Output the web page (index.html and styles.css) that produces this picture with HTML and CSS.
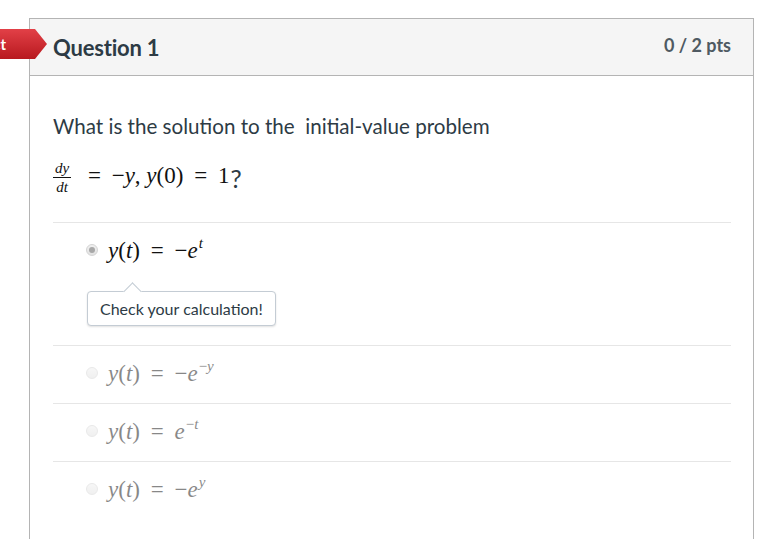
FILE: index.html
```html
<!DOCTYPE html>
<html lang="en">
<head>
  <meta charset="UTF-8" />
  <title>Question 1</title>
  <link rel="stylesheet" href="styles.css">
</head>
<body>
  <div class="page">
    <div class="question">
      <div class="flag"><span>Incorrect</span></div>

      <div class="question-header">
        <h2>Question 1</h2>
        <span class="points">0 / 2 pts</span>
      </div>

      <div class="question-body">
        <p class="prompt">What is the solution to the&nbsp; initial-value problem</p>
        <p class="equation">
          <span class="math">
            <span class="frac"><span class="num">dy</span><span class="den">dt</span></span>
            <span class="op">=</span> −<i>y</i>, <i>y</i>(0) <span class="op">=</span> 1</span><span class="qmark">?</span>
        </p>

        <div class="answers">
          <div class="answer selected">
            <div class="answer-row">
              <span class="radio checked"></span>
              <span class="math"><i>y</i>(<i>t</i>) <span class="op">=</span> −<i>e</i><sup><i>t</i></sup></span>
            </div>
            <div class="comment">Check your calculation!</div>
          </div>

          <div class="answer">
            <div class="answer-row">
              <span class="radio"></span>
              <span class="math"><i>y</i>(<i>t</i>) <span class="op">=</span> −<i>e</i><sup>−<i>y</i></sup></span>
            </div>
          </div>

          <div class="answer">
            <div class="answer-row">
              <span class="radio"></span>
              <span class="math"><i>y</i>(<i>t</i>) <span class="op">=</span> <i>e</i><sup>−<i>t</i></sup></span>
            </div>
          </div>

          <div class="answer">
            <div class="answer-row">
              <span class="radio"></span>
              <span class="math"><i>y</i>(<i>t</i>) <span class="op">=</span> −<i>e</i><sup><i>y</i></sup></span>
            </div>
          </div>
        </div>
      </div>
    </div>
  </div>
</body>
</html>
```

FILE: styles.css
```css
body {
  margin: 0;
  background: #fff;
  font-family: Lato, 'Open Sans', sans-serif;
  color: #2d3b45;
  overflow: hidden;
}

.page {
  padding: 18px 3px 0 29px;
}

.question {
  position: relative;
  border: 1px solid #b4b4b4;
  border-bottom: none;
  min-height: 540px;
}

.flag {
  position: absolute;
  left: -103px;
  top: 10px;
  width: 120px;
  height: 30px;
  background: linear-gradient(#e24047, #b8191f);
  clip-path: polygon(0 0, 90% 0, 100% 50%, 90% 100%, 0 100%);
  color: #fff;
  font-weight: bold;
  font-size: 15px;
  line-height: 30px;
  text-align: right;
  box-sizing: border-box;
  padding-right: 41px;
}

.question-header {
  display: flex;
  justify-content: space-between;
  align-items: flex-start;
  height: 56px;
  background: #f5f5f5;
  border-bottom: 1px solid #b4b4b4;
  padding: 0 22px 0 23px;
}

.question-header h2 {
  margin: 15px 0 0;
  font-size: 22px;
  font-weight: bold;
  letter-spacing: -0.2px;
}

.points {
  margin-top: 15px;
  font-size: 18px;
  font-weight: bold;
  color: #4f5a62;
}

.question-body {
  padding: 36px 22px 0 23px;
}

.prompt {
  margin: 0;
  font-size: 20.6px;
  line-height: 28px;
}

.equation {
  margin: 20px 0 0;
  display: flex;
  align-items: center;
  height: 36px;
}

.math {
  font-family: 'Liberation Serif', 'DejaVu Serif', serif;
  font-size: 23px;
  color: #111;
  white-space: nowrap;
}

.op {
  margin: 0 5px;
}

.frac {
  display: inline-flex;
  flex-direction: column;
  align-items: center;
  vertical-align: middle;
  font-style: italic;
  font-size: 15px;
  line-height: 15px;
  margin-right: 6px;
}

.frac .num {
  border-bottom: 1px solid #111;
  padding: 0 2px 1px;
}

.frac .den {
  padding-top: 2px;
}

.qmark {
  font-size: 25px;
  color: #2d3b45;
  margin-left: 1px;
}

sup {
  font-size: 15px;
  vertical-align: 10px;
  line-height: 0;
  margin-left: 1px;
}

.answers {
  margin-top: 26px;
}

.answer {
  border-top: 1px solid #e6e6e6;
  min-height: 57px;
}

.answer:not(.selected) .answer-row {
  opacity: 0.5;
}

.answer-row {
  display: flex;
  align-items: center;
  height: 56px;
  padding-left: 33px;
}

.radio {
  width: 12px;
  height: 12px;
  border-radius: 50%;
  border: 1px solid #d4d4d4;
  background: linear-gradient(#f0f0f0, #e2e2e2);
  box-sizing: border-box;
  margin-right: 10px;
  margin-top: -3px;
  position: relative;
}

.radio.checked::after {
  content: "";
  position: absolute;
  left: 2px;
  top: 2px;
  width: 6px;
  height: 6px;
  border-radius: 50%;
  background: #a8a8a8;
}

.selected {
  min-height: 122px;
}

.comment {
  position: relative;
  display: inline-block;
  margin: 12px 0 0 34px;
  padding: 7px 12px;
  font-size: 16px;
  line-height: 19px;
  border: 1px solid #c4ccd4;
  border-radius: 4px;
  background: #fff;
  box-shadow: 0 1px 2px rgba(0, 0, 0, 0.12);
}

.comment::before {
  content: "";
  position: absolute;
  left: 38px;
  top: -7px;
  width: 12px;
  height: 12px;
  background: #fff;
  border-left: 1px solid #c4ccd4;
  border-top: 1px solid #c4ccd4;
  transform: rotate(45deg);
}
```
